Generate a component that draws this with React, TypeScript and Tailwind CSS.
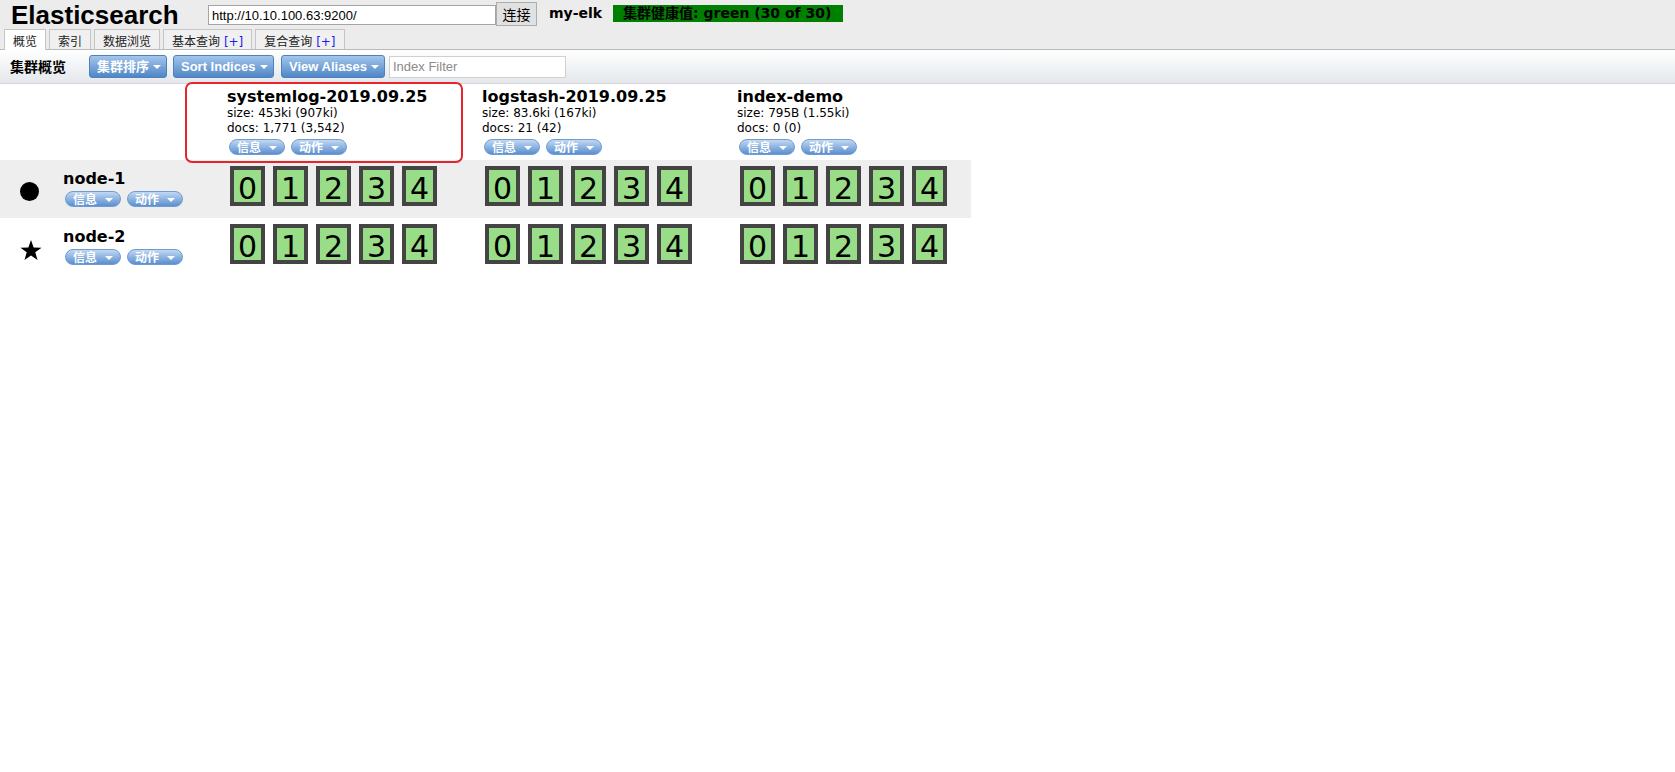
import React from 'react';

const sans = "font-['DejaVu_Sans','Noto_Sans_CJK_SC',sans-serif]";
const cjk = "font-['Noto_Sans_CJK_SC',sans-serif]";
const arial = "font-['Liberation_Sans','Noto_Sans_CJK_SC',sans-serif]";

const indices = [
  { name: 'systemlog-2019.09.25', size: '453ki (907ki)', docs: '1,771 (3,542)' },
  { name: 'logstash-2019.09.25', size: '83.6ki (167ki)', docs: '21 (42)' },
  { name: 'index-demo', size: '795B (1.55ki)', docs: '0 (0)' },
];

const nodes = [
  { name: 'node-1', master: true },
  { name: 'node-2', master: false },
];

function Caret() {
  return (
    <span className="block w-0 h-0 border-l-[4px] border-r-[4px] border-t-[4px] border-l-transparent border-r-transparent border-t-white" />
  );
}

function Pill({ label }: { label: string }) {
  return (
    <div className="h-[16px] w-[56px] overflow-hidden rounded-full border border-[#6f9cd2] bg-linear-to-b from-[#c2d8f1] to-[#5a8fd0] flex items-center justify-between pl-[7px] pr-[7px]">
      <span className={`${cjk} text-[12px] leading-[14px] font-bold text-white`}>{label}</span>
      <span className="mt-[1px]">
        <Caret />
      </span>
    </div>
  );
}

function ToolButton({ label, width }: { label: string; width: string }) {
  return (
    <div
      className={`${width} h-[23px] rounded-[3px] border border-[#4f81bd] bg-linear-to-b from-[#a3c6eb] to-[#4f86c6] flex items-center justify-between pl-[7px] pr-[5px] text-white font-bold text-[13px] ${arial}`}
    >
      <span>{label}</span>
      <Caret />
    </div>
  );
}

function Shards() {
  return (
    <div className="flex gap-[8px] pl-[3px] pt-[6px]">
      {[0, 1, 2, 3, 4].map((n) => (
        <div
          key={n}
          className="w-[35px] h-[40px] border-[4px] border-[#444444] bg-[#99dd88] overflow-hidden text-center"
        >
          <span className={`${sans} block text-[30px] leading-[37px] text-black`}>{n}</span>
        </div>
      ))}
    </div>
  );
}

function Star() {
  return (
    <svg width="22" height="20" viewBox="0 0 24 22">
      <polygon
        points="12,0 14.9,8.2 23.6,8.4 16.7,13.6 19.2,22 12,17 4.8,22 7.3,13.6 0.4,8.4 9.1,8.2"
        fill="#000"
      />
    </svg>
  );
}

export default function App() {
  return (
    <div className={`relative min-h-screen bg-white text-black ${sans}`}>
      {/* Header */}
      <div className="bg-[#ececec]">
        <div className="flex items-start h-[30px]">
          <div className="w-[208px] shrink-0 pl-[11px]">
            <h1 className={`${arial} mt-[2px] text-[26px] leading-[26px] font-bold`}>Elasticsearch</h1>
          </div>
          <input
            defaultValue="http://10.10.100.63:9200/"
            className={`${arial} mt-[5px] w-[288px] h-[20px] border border-[#a5a5a5] bg-white px-[3px] text-[13px] text-black outline-none`}
          />
          <button
            className={`${cjk} mt-[2px] w-[41px] h-[24px] border border-[#adadad] bg-[#e1e1e1] text-[14px] leading-[20px] text-black`}
          >
            连接
          </button>
          <span className="ml-[12px] w-[64px] mt-[5px] text-[14px] leading-[17px] font-bold">my-elk</span>
          <div className="mt-[5px] h-[17px] w-[230px] bg-[#008000] pl-[10px] text-[14px] leading-[17px] font-bold text-black whitespace-nowrap">
            集群健康值: green (30 of 30)
          </div>
        </div>

        {/* Tabs */}
        <div className="flex items-end h-[20px] pl-[4px] gap-[3px] border-b border-[#b9b9b9] text-[12px] text-[#222]">
          <div className="h-[21px] -mb-px px-[8px] pt-[3px] border border-b-0 border-[#c6c6c6] bg-white">概览</div>
          <div className="h-[20px] px-[8px] pt-[3px] border border-b-0 border-[#c6c6c6] bg-[#f0f0f0]">索引</div>
          <div className="h-[20px] px-[8px] pt-[3px] border border-b-0 border-[#c6c6c6] bg-[#f0f0f0]">数据浏览</div>
          <div className="h-[20px] px-[8px] pt-[3px] border border-b-0 border-[#c6c6c6] bg-[#f0f0f0]">
            基本查询 <span className="text-[#1a1aee]">[+]</span>
          </div>
          <div className="h-[20px] px-[8px] pt-[3px] border border-b-0 border-[#c6c6c6] bg-[#f0f0f0]">
            复合查询 <span className="text-[#1a1aee]">[+]</span>
          </div>
        </div>
      </div>

      {/* Toolbar */}
      <div className="flex items-center h-[34px] border-b border-[#d6d6d6] bg-linear-to-b from-white to-[#e4e8ec]">
        <div className={`${cjk} w-[89px] pl-[10px] text-[14px] font-bold`}>集群概览</div>
        <ToolButton label="集群排序" width="w-[78px]" />
        <div className="w-[6px]" />
        <ToolButton label="Sort Indices" width="w-[101px]" />
        <div className="w-[7px]" />
        <ToolButton label="View Aliases" width="w-[104px]" />
        <input
          placeholder="Index Filter"
          className={`${arial} ml-[4px] w-[177px] h-[22px] border border-[#d0d0d0] bg-white px-[3px] text-[13px] text-black placeholder:text-[#8a8a8a] outline-none`}
        />
      </div>

      {/* Cluster overview table */}
      <div className="w-[971px]">
        <div className="grid grid-cols-[227px_255px_255px_234px] h-[76px]">
          <div />
          {indices.map((ix) => (
            <div key={ix.name} className="flex flex-col pt-[4px]">
              <div className="text-[16px] leading-[18px] font-bold">{ix.name}</div>
              <div className="text-[12px] leading-[15px]">size: {ix.size}</div>
              <div className="text-[12px] leading-[15px]">docs: {ix.docs}</div>
              <div className="mt-[3px] ml-[2px] flex gap-[6px]">
                <Pill label="信息" />
                <Pill label="动作" />
              </div>
            </div>
          ))}
        </div>

        {nodes.map((node, i) => (
          <div
            key={node.name}
            className={`grid grid-cols-[227px_255px_255px_234px] h-[58px] ${i === 0 ? 'bg-[#eeeeee]' : 'bg-white'}`}
          >
            <div className="flex">
              <div className="w-[63px] pl-[20px] pt-[22px]">
                {node.master ? <div className="w-[19px] h-[19px] rounded-full bg-black" /> : <Star />}
              </div>
              <div className="flex flex-col pt-[10px]">
                <div className="text-[16px] leading-[18px] font-bold">{node.name}</div>
                <div className="mt-[3px] ml-[2px] flex gap-[6px]">
                  <Pill label="信息" />
                  <Pill label="动作" />
                </div>
              </div>
            </div>
            {indices.map((ix) => (
              <Shards key={ix.name} />
            ))}
          </div>
        ))}
      </div>

      {/* Annotation highlight */}
      <div className="absolute top-[82px] left-[185px] w-[278px] h-[81px] rounded-[7px] border-2 border-[#e5242b] pointer-events-none" />
    </div>
  );
}
